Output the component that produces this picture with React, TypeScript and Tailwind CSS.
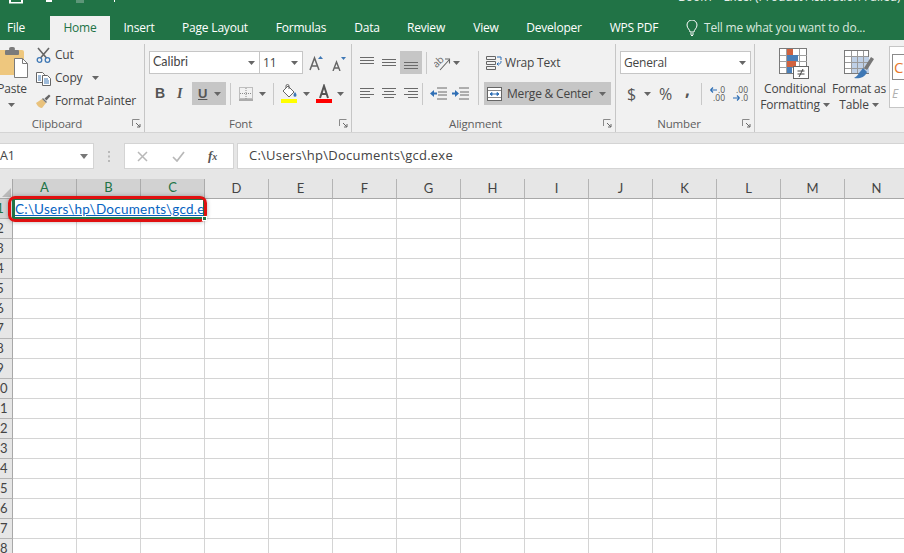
import React from "react";

const columns = ["D", "E", "F", "G", "H", "I", "J", "K", "L", "M", "N"];
const rows = [2, 3, 4, 5, 6, 7, 8, 9, 10, 11, 12, 13, 14, 15, 16, 17, 18];

const Caret = ({ className = "" }: { className?: string }) => (
  <svg width="7" height="4" viewBox="0 0 7 4" className={`shrink-0 ${className}`}>
    <path d="M0 0h7L3.5 4z" fill="#666" />
  </svg>
);

const Launcher = () => (
  <svg width="9" height="9" viewBox="0 0 9 9" className="shrink-0">
    <path d="M.5 7V.5H7.500" fill="none" stroke="#8a8a8a" />
    <path d="M4 4l4 4M8 5v3H5" fill="none" stroke="#666" />
  </svg>
);

const Sep = () => <div className="w-px h-[22px] bg-[#c8c8c8] shrink-0" />;

// horizontal strokes used by all the align icons
const Lines = ({ ys, widths, align }: { ys: number[]; widths: number[]; align: "l" | "c" | "r" }) => (
  <svg width="16" height="16" viewBox="0 0 16 16" className="shrink-0">
    {ys.map((y, i) => {
      const w = widths[i];
      const x = align === "l" ? 1 : align === "r" ? 15 - w : 8 - w / 2;
      return <rect key={i} x={x} y={y} width={w} height="1" fill="#6a6a6a" />;
    })}
  </svg>
);

const Group = ({ width, label, labelClass = "", children }: { width: string; label: string; labelClass?: string; children: React.ReactNode }) => (
  <div className={`${width} shrink-0 h-[88px] mt-[4px] border-r border-[#c6c6c6] flex flex-col`}>
    <div className="flex-1 min-h-0">{children}</div>
    <div className="h-[17px] flex items-center text-[11.5px] text-[#5e5e5e] shrink-0">
      <div className={`flex-1 text-center ${labelClass}`}>{label}</div>
      <div className="mr-[3px]">
        <Launcher />
      </div>
    </div>
  </div>
);

const ClipboardGroup = () => (
  <Group width="w-[145px]" label="Clipboard" labelClass="pr-[18px]">
    <div className="flex">
      <div className="w-[36px] shrink-0 flex flex-col items-center overflow-hidden">
        <svg width="36" height="34" viewBox="0 0 36 34" className="mt-[3px] shrink-0">
          <rect x="-10" y="3" width="34" height="25" rx="2" fill="#eec77e" />
          <rect x="5" y="3" width="14" height="5" rx="1" fill="#7b7b7b" />
          <rect x="9" y="0" width="6" height="4" rx="2" fill="#7b7b7b" />
          <path d="M14.5 11.5h8l5 5v14h-13z" fill="#fff" stroke="#7b7b7b" />
          <path d="M22.5 11.5v5h5" fill="none" stroke="#7b7b7b" />
        </svg>
        <div className="text-[12px] leading-[14px] text-[#444] mt-[1px] -ml-[12px]">Paste</div>
        <Caret className="mt-[7px] -translate-x-[7px]" />
      </div>
      <div className="flex flex-col text-[12px] text-[#444]">
        <div className="h-[22px] flex items-center gap-[4px]">
          <svg width="15" height="16" viewBox="0 0 15 16">
            <path d="M2 1l8.500 10M13 1L4.500 11" stroke="#666" strokeWidth="1.600" fill="none" />
            <circle cx="3.500" cy="13" r="2.300" fill="none" stroke="#3f78b5" strokeWidth="1.300" />
            <circle cx="11.500" cy="13" r="2.300" fill="none" stroke="#3f78b5" strokeWidth="1.300" />
          </svg>
          Cut
        </div>
        <div className="h-[24px] flex items-center gap-[4px]">
          <svg width="15" height="15" viewBox="0 0 15 15">
            <path d="M.5 1.500h6l2 2v8h-8z" fill="#fff" stroke="#666" />
            <path d="M6.500 4.500h5l3 3v7h-8z" fill="#fff" stroke="#666" />
            <path d="M2 5h3M2 7h3M2 9h3M8 8h4M8 10h5M8 12h5" stroke="#3f78b5" />
          </svg>
          Copy
          <Caret className="ml-[6px]" />
        </div>
        <div className="h-[22px] flex items-center gap-[4px]">
          <svg width="15" height="15" viewBox="0 0 15 15">
            <path d="M0 9l6-4 4 4-4 5c-2 0-5-2-6-5z" fill="#e9c27c" />
            <path d="M6 5l4 4 1-1-4-4z" fill="#777" />
            <path d="M8.500 4.500L13 .5l1.500 1.500-4 4.500z" fill="#666" />
          </svg>
          Format Painter
        </div>
      </div>
    </div>
  </Group>
);

const FontGroup = () => (
  <Group width="w-[207px]" label="Font" labelClass="pr-[3px]">
    <div className="pl-[4px] pt-[7px] flex flex-col gap-[8px]">
      <div className="flex items-center h-[23px]">
        <div className="w-[111px] h-[23px] bg-white border border-[#c6c6c6] flex items-center justify-between pl-[3px] pr-[4px] text-[#444]">
          <span className="font-['Lato',sans-serif] text-[12.5px] tracking-normal">Calibri</span>
          <Caret />
        </div>
        <div className="w-[43px] h-[23px] bg-white border border-l-0 border-[#c6c6c6] flex items-center justify-between pl-[3px] pr-[4px] text-[12px] text-[#444]">
          <span>11</span>
          <Caret />
        </div>
        <svg width="14" height="16" viewBox="0 0 14 16" className="ml-[6px]">
          <path d="M1 15L5.500 3 10 15M2.700 11h5.600" fill="none" stroke="#666" strokeWidth="1.500" />
          <path d="M9 4l2.500-3L14 4z" fill="#3f78b5" />
        </svg>
        <svg width="14" height="14" viewBox="0 0 14 14" className="ml-[9px] mt-[2px]">
          <path d="M1 14L4.500 5 8 14M2.300 11h4.400" fill="none" stroke="#666" strokeWidth="1.400" />
          <path d="M9 0h5l-2.500 3z" fill="#3f78b5" />
        </svg>
      </div>
      <div className="flex items-center h-[23px] text-[#555]">
        <div className="w-[9px] ml-[6px] font-bold text-[14px] font-['Liberation_Sans',sans-serif] tracking-normal">B</div>
        <div className="w-[8px] ml-[13px] italic font-bold text-[14px] font-['Liberation_Serif',serif] tracking-normal">I</div>
        <div className="w-[34px] h-[23px] ml-[7px] bg-[#c6c6c6] flex items-center pl-[6px] gap-[7px]">
          <span className="font-bold text-[13px] underline font-['Liberation_Sans',sans-serif] tracking-normal">U</span>
          <Caret />
        </div>
        <div className="w-[4px]" />
        <Sep />
        <svg width="15" height="14" viewBox="0 0 15 14" className="ml-[8px]">
          <rect x=".5" y=".5" width="13" height="11" fill="none" stroke="#8a8a8a" strokeDasharray="1 1" />
          <path d="M7 1v11M1 6.500h12" stroke="#8a8a8a" strokeDasharray="1 1" />
          <path d="M0 13h14" stroke="#666" />
        </svg>
        <Caret className="ml-[5px]" />
        <div className="w-[7px]" />
        <Sep />
        <svg width="17" height="20" viewBox="0 0 17 20" className="ml-[7px]">
          <path d="M2 7l5-5 6 6-5 5z" fill="#fff" stroke="#666" />
          <path d="M5 4V2a1.500 1.500 0 0 1 3 0v3" fill="none" stroke="#666" />
          <path d="M14 8c1 1.500 1.500 2.200 1.500 3.200a1.500 1.500 0 0 1-3 0c0-1 .5-1.700 1.500-3.200z" fill="#3f78b5" />
          <rect x="0" y="15" width="16" height="4" fill="#ffff00" />
        </svg>
        <Caret className="ml-[5px]" />
        <svg width="17" height="20" viewBox="0 0 17 20" className="ml-[6px]">
          <path d="M4 14L8 2 12 14M5.500 10h5" fill="none" stroke="#555" strokeWidth="2" />
          <rect x="0" y="15" width="16" height="4" fill="#ff0000" />
        </svg>
        <Caret className="ml-[4px]" />
      </div>
    </div>
  </Group>
);

const AlignmentGroup = () => (
  <Group width="w-[264px]" label="Alignment" labelClass="pr-[4px]">
    <div className="flex pt-[7px] h-[61px]">
      <div className="w-[126px] shrink-0 pl-[7px] flex flex-col gap-[8px]">
        <div className="flex items-center h-[23px]">
          <Lines ys={[2, 5, 8]} widths={[14, 14, 14]} align="c" />
          <div className="w-[6px]" />
          <div className="mt-[5px]">
            <Lines ys={[2, 5, 8]} widths={[14, 14, 14]} align="c" />
          </div>
          <div className="w-[22px] h-[23px] bg-[#c6c6c6] ml-[3px] flex items-center justify-center">
            <div className="mt-[8px]">
              <Lines ys={[3, 6, 9]} widths={[14, 14, 14]} align="c" />
            </div>
          </div>
          <div className="w-[4px]" />
          <Sep />
          <svg width="17" height="17" viewBox="0 0 17 17" className="ml-[7px]">
            <text x="-1" y="10" fontSize="10" fill="#666" transform="rotate(-42 6 8)" fontFamily="Open Sans">ab</text>
            <path d="M6 16L15 6M11 5h4.500v4.500" fill="none" stroke="#666" strokeWidth="1.100" />
          </svg>
          <Caret className="ml-[2px]" />
        </div>
        <div className="flex items-center h-[23px]">
          <Lines ys={[2, 5, 8, 11]} widths={[14, 10, 14, 10]} align="l" />
          <div className="w-[6px]" />
          <Lines ys={[2, 5, 8, 11]} widths={[14, 10, 14, 10]} align="c" />
          <div className="w-[6px]" />
          <Lines ys={[2, 5, 8, 11]} widths={[14, 10, 14, 10]} align="r" />
          <div className="w-[3px]" />
          <Sep />
          <svg width="17" height="14" viewBox="0 0 17 14" className="ml-[7px]">
            <path d="M7 1h10M8 5h9M8 8h9M7 12h10" stroke="#6a6a6a" />
            <path d="M0 6.500L4 3v2.500h3v2H4V10z" fill="#2f6fb5" />
          </svg>
          <svg width="17" height="14" viewBox="0 0 17 14" className="ml-[5px]">
            <path d="M7 1h10M8 5h9M8 8h9M7 12h10" stroke="#6a6a6a" />
            <path d="M7 6.500L3 3v2.500H0v2h3V10z" fill="#2f6fb5" />
          </svg>
        </div>
      </div>
      <div className="w-px h-[54px] bg-[#c8c8c8] shrink-0" />
      <div className="ml-[5px] flex flex-col gap-[8px] text-[12px] text-[#444]">
        <div className="h-[23px] pl-[2px] flex items-center gap-[3px]">
          <svg width="16" height="16" viewBox="0 0 16 16">
            <path d="M.5 1.500h9v3h-9zM.5 6.500h9v3h-9zM.5 11.500h9v3h-9z" fill="none" stroke="#666" />
            <path d="M11 2h4v3M15 6c0 3-1 3-4 3M12.500 7.500L11 9l1.500 1.500" fill="none" stroke="#2f6fb5" />
          </svg>
          Wrap Text
        </div>
        <div className="w-[127px] h-[23px] bg-[#c6c6c6] flex items-center pl-[3px] pr-[5px] gap-[4px]">
          <svg width="16" height="16" viewBox="0 0 16 16">
            <rect x=".5" y="1.500" width="14" height="13" fill="#fff" stroke="#666" />
            <path d="M1 4.500h13M1 11.500h13" stroke="#888" />
            <path d="M3 8h9M3 8l2-1.500v3zM12 8l-2-1.500v3z" fill="#2f6fb5" stroke="#2f6fb5" />
          </svg>
          <span className="flex-1">Merge &amp; Center</span>
          <Caret />
        </div>
      </div>
    </div>
  </Group>
);

const DecimalArrow = ({ left }: { left?: boolean }) => (
  <svg width="7" height="6" viewBox="0 0 7 6" className="shrink-0">
    <path d={left ? "M.5 3h6.500M.5 3L3 .5M.5 3L3 5.500" : "M0 3h6.500M6.500 3L4 .5M6.500 3L4 5.500"} fill="none" stroke="#2f6fb5" strokeWidth="1.200" />
  </svg>
);

const NumberGroup = () => (
  <Group width="w-[139px]" label="Number">
    <div className="pl-[4px] pt-[7px] flex flex-col gap-[8px]">
      <div className="w-[131px] h-[23px] bg-white border border-[#c6c6c6] flex items-center justify-between pl-[3px] pr-[4px] text-[12px] text-[#444]">
        <span>General</span>
        <Caret />
      </div>
      <div className="flex items-center h-[23px] text-[#555]">
        <span className="text-[16px] w-[9px] ml-[7px] text-center leading-none">$</span>
        <Caret className="ml-[8px]" />
        <span className="text-[16px] w-[15px] ml-[8px] leading-none">%</span>
        <span className="font-bold text-[17px] w-[5px] ml-[11px] -mt-[9px] leading-none">,</span>
        <div className="w-[11px]" />
        <Sep />
        <div className="w-[16px] ml-[7px] flex flex-col items-end text-[8.5px] leading-[8px] tracking-normal">
          <div className="flex items-center gap-[1px]">
            <DecimalArrow left />
            <span>.0</span>
          </div>
          <div>.00</div>
        </div>
        <div className="w-[16px] ml-[7px] flex flex-col items-end text-[8.5px] leading-[8px] tracking-normal">
          <div>.00</div>
          <div className="flex items-center gap-[1px]">
            <DecimalArrow />
            <span>.0</span>
          </div>
        </div>
      </div>
    </div>
  </Group>
);

const StylesGroup = () => (
  <div className="flex-1 h-[88px] mt-[4px] flex text-[12px] text-[#444] leading-[16px]">
    <div className="w-[80px] shrink-0 flex flex-col items-center pt-[4px]">
      <svg width="31" height="31" viewBox="0 0 31 31" className="ml-[-2px]">
        <rect x=".5" y=".5" width="27" height="25" fill="#fff" stroke="#7a7a7a" />
        <path d="M7.500 1v24M20.500 1v24M1 7.500h27M1 13.500h27M1 19.500h27" stroke="#a0a0a0" />
        <rect x="8" y="1" width="6" height="6" fill="#d0623f" />
        <rect x="8" y="7" width="11" height="6" fill="#4a7fb8" />
        <rect x="8" y="13" width="9" height="6" fill="#d0623f" />
        <rect x="8" y="19" width="5" height="6" fill="#4a7fb8" />
        <rect x="14.500" y="18.500" width="15" height="12" fill="#fff" stroke="#666" />
        <path d="M18.500 23h7M18.500 26h7M24 21l-4 8" stroke="#444" fill="none" />
      </svg>
      <div className="mt-[2px] text-center whitespace-nowrap">Conditional</div>
      <div className="flex items-center gap-[3px] whitespace-nowrap">Formatting<Caret /></div>
    </div>
    <div className="w-[50px] shrink-0 flex flex-col items-center pt-[4px] ml-[-1px]">
      <svg width="31" height="31" viewBox="0 0 31 31">
        <rect x=".5" y="2.500" width="24" height="23" fill="#fff" stroke="#7a7a7a" />
        <rect x="7" y="9" width="18" height="16" fill="#bfd0e6" />
        <path d="M7.500 3v22M13.500 3v22M19.500 3v22M1 8.500h23M1 14.500h23M1 20.500h23" stroke="#9a9a9a" />
        <path d="M20 20L27 9l3 2-7 11z" fill="#777" />
        <path d="M19 20c-1 1-2 3-4 5-1 2-3 4-5 5 4 1 11 0 13-6z" fill="#3f78b5" />
      </svg>
      <div className="mt-[2px] whitespace-nowrap">Format as</div>
      <div className="flex items-center gap-[3px]">Table<Caret /></div>
    </div>
    <div className="ml-[5px] mt-[2px] h-[62px] flex-1 bg-white border border-[#c6c6c6] pt-[7px] pl-[2px] overflow-hidden">
      <div className="w-[20px] h-[26px] border border-[#8a8a8a] flex items-center text-[15px] text-[#e8792d] pl-[1px]">C</div>
      <div className="italic text-[#b0b0b0] mt-[6px]">E</div>
    </div>
  </div>
);

// the window is scrolled a little, so only the right side of the numbers shows
const RowHeader = ({ n, active }: { n: number; active?: boolean }) => (
  <div
    className={`w-[13px] shrink-0 flex items-center overflow-hidden border-r border-b ${
      active ? "bg-[#d2d2d2] text-[#217346] border-r-[#217346] border-b-[#ababab]" : "bg-[#e6e6e6] text-[#444] border-r-[#a8a8a8] border-b-[#b4b4b4]"
    }`}
  >
    <span className="block w-[26px] -ml-[13px] shrink-0 text-center text-[13px] leading-none">{n}</span>
  </div>
);

const App = () => {
  return (
    <div className="w-[904px] h-[553px] overflow-hidden bg-white flex flex-col font-['Open_Sans',sans-serif] tracking-[-0.2px]">
      {/* title bar and tabs */}
      <div className="h-[40px] shrink-0 bg-[#217346] flex flex-col text-white text-[12px]">
        <div className="h-[16px] shrink-0 overflow-hidden flex">
          <svg width="120" height="4" viewBox="0 0 120 4" className="shrink-0">
            <path d="M9 0v3.500h14V0h-2v2H11V0z" fill="#fff" />
            <rect x="46" y="0" width="6" height="2" fill="#fff" />
            <rect x="76" y="0" width="8" height="3" fill="#5d9678" />
            <rect x="114" y="0" width="1" height="2" fill="#fff" />
          </svg>
          <div className="ml-[558px] -mt-[11px] whitespace-nowrap leading-[16px] text-[#e6efe9] tracking-normal">Book1 - Excel (Product Activation Failed)</div>
        </div>
        <div className="h-[24px] flex items-center">
          <div className="w-[32px] text-center">File</div>
          <div className="w-[18px]" />
          <div className="w-[60px] h-full bg-[#f1f1f1] text-[#217346] flex items-center justify-center">Home</div>
          <div className="w-[58px] text-center">Insert</div>
          <div className="w-[94px] text-center">Page Layout</div>
          <div className="w-[78px] text-center">Formulas</div>
          <div className="w-[54px] text-center">Data</div>
          <div className="w-[64px] text-center">Review</div>
          <div className="w-[56px] text-center">View</div>
          <div className="w-[80px] text-center">Developer</div>
          <div className="w-[80px] text-center">WPS PDF</div>
          <div className="w-[12px]" />
          <div className="flex items-center gap-[6px] text-[#d9e8df]">
            <svg width="12" height="16" viewBox="0 0 12 16">
              <path d="M4 12c0-2.500-3-3.500-3-7a5 5 0 0 1 10 0c0 3.500-3 4.500-3 7z" fill="none" stroke="#fff" />
              <path d="M4 14h4M5 15.500h2" stroke="#fff" />
            </svg>
            Tell me what you want to do...
          </div>
        </div>
      </div>

      {/* ribbon */}
      <div className="h-[93px] shrink-0 bg-[#f1f1f1] border-b border-[#d4d4d4] flex">
        <ClipboardGroup />
        <FontGroup />
        <AlignmentGroup />
        <NumberGroup />
        <StylesGroup />
      </div>

      {/* formula bar */}
      <div className="h-[46px] shrink-0 bg-[#e6e6e6] flex items-center text-[#444]">
        <div className="w-[94px] h-[26px] bg-white border border-[#d4d4d4] border-l-0 flex items-center justify-between pr-[5px]">
          <span className="text-[12.5px]">A1</span>
          <svg width="8" height="5" viewBox="0 0 8 5"><path d="M0 0h8L4 5z" fill="#777" /></svg>
        </div>
        <div className="w-[30px] flex justify-center">
          <svg width="3" height="11" viewBox="0 0 3 11"><path d="M1 0v2M1 4.500v2M1 9v2" stroke="#aaa" strokeWidth="1.500" /></svg>
        </div>
        <div className="w-[110px] h-[26px] bg-white border border-[#d4d4d4] flex items-center">
          <svg width="11" height="11" viewBox="0 0 11 11" className="ml-[12px]"><path d="M1 1l9 9M10 1l-9 9" stroke="#b8b8b8" strokeWidth="1.500" /></svg>
          <svg width="13" height="11" viewBox="0 0 13 11" className="ml-[24px]"><path d="M1 6l4 4 7-9" fill="none" stroke="#b8b8b8" strokeWidth="1.700" /></svg>
          <span className="ml-[23px] italic font-bold font-['Liberation_Serif',serif] text-[13px] text-[#555]">f<span className="text-[10px]">x</span></span>
        </div>
        <div className="w-[3px]" />
        <div className="flex-1 h-[26px] bg-white border border-r-0 border-[#d4d4d4] flex items-center pl-[11px] text-[13px] tracking-[0.25px]">C:\Users\hp\Documents\gcd.exe</div>
      </div>

      {/* sheet */}
      <div className="flex-1 relative text-[#444] font-['Lato',sans-serif] tracking-normal overflow-hidden">
        <div className="flex h-[20px]">
          <div className="w-[13px] shrink-0 bg-[#e6e6e6] border-r border-b border-[#a8a8a8] flex items-end justify-end overflow-hidden">
            <div className="w-0 h-0 border-l-[9px] border-l-transparent border-b-[9px] border-b-[#b9b9b9] mr-[1px] mb-[1px]" />
          </div>
          {["A", "B", "C"].map((c) => (
            <div key={c} className="w-[64px] shrink-0 bg-[#d2d2d2] border-r border-r-[#ababab] border-b-2 border-b-[#217346] text-[#217346] text-[13px] flex items-center justify-center">
              {c}
            </div>
          ))}
          {columns.map((c) => (
            <div key={c} className="w-[64px] shrink-0 bg-[#e6e6e6] border-r border-r-[#b4b4b4] border-b border-b-[#a8a8a8] text-[13px] flex items-center justify-center">
              {c}
            </div>
          ))}
        </div>

        <div className="flex h-[20px]">
          <RowHeader n={1} active />
          <div className="w-[192px] shrink-0 border-2 border-[#217346] -mt-[1px] h-[21px] flex items-center overflow-hidden">
            <span className="whitespace-nowrap text-[#0563c1] underline text-[13.5px] leading-none tracking-[0.25px] mt-[2px]">C:\Users\hp\Documents\gcd.exe</span>
          </div>
          {columns.map((c) => (
            <div key={c} className="w-[64px] shrink-0 border-r border-b border-[#d4d4d4]" />
          ))}
        </div>

        {rows.map((n) => (
          <div key={n} className="flex h-[20px]">
            <RowHeader n={n} />
            {["A", "B", "C", ...columns].map((c) => (
              <div key={c} className="w-[64px] shrink-0 border-r border-b border-[#d4d4d4]" />
            ))}
          </div>
        ))}

        {/* annotation drawn over the selected cell */}
        <div className="absolute left-[8px] top-[17px] w-[199px] h-[26px] rounded-[7px] border-[3px] border-[#e01010] shadow-[0_0_4px_rgba(0,0,0,0.3)]" />
        <div className="absolute left-[202px] top-[37px] w-[5px] h-[5px] bg-[#217346] border border-white" />
      </div>
    </div>
  );
};

export default App;
